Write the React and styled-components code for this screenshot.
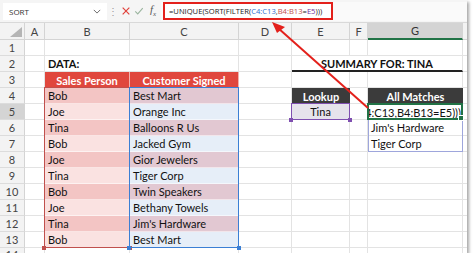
import React from "react";
import styled, { createGlobalStyle, css } from "styled-components";

const GlobalStyle = createGlobalStyle`
  html, body { margin: 0; padding: 0; background: #fff; }
  * { box-sizing: border-box; }
`;

const COLS = ["A", "B", "C", "D", "E", "F", "G"];

const people = ["Bob", "Joe", "Tina", "Bob", "Joe", "Tina", "Bob", "Joe", "Tina", "Bob"];
const customers = [
  "Best Mart",
  "Orange Inc",
  "Balloons R Us",
  "Jacked Gym",
  "Gior Jewelers",
  "Tiger Corp",
  "Twin Speakers",
  "Bethany Towels",
  "Jim's Hardware",
  "Best Mart",
];

// summary side, keyed by sheet row
const matches = { 6: "Jim's Hardware", 7: "Tiger Corp" };

// grid row = sheet row + 1 (row 1 of the grid is the column headings)
const g = (r) => r + 1;

function App() {
  return (
    <>
      <GlobalStyle />
      <Frame>
        <FormulaBar>
          <NameBox>
            <span>SORT</span>
            <Chevron viewBox="0 0 10 6">
              <path d="M1 1l4 4 4-4" fill="none" stroke="#666" strokeWidth="1.2" />
            </Chevron>
          </NameBox>
          <Dots>⋮</Dots>
          <IconBtn viewBox="0 0 12 12">
            <path d="M2 2l8 8M10 2l-8 8" stroke="#e0403a" strokeWidth="1.4" />
          </IconBtn>
          <IconBtn viewBox="0 0 12 12">
            <path d="M1.5 6.5l3 3 6-7" fill="none" stroke="#9bb59f" strokeWidth="1.3" />
          </IconBtn>
          <Fx>
            f<sub>x</sub>
          </Fx>
          <FormulaField>
            <Callout>
              =UNIQUE(SORT(FILTER(<Ref $color="#2f6fd0">C4:C13</Ref>,<Ref $color="#c0504d">B4:B13</Ref>=
              <Ref $color="#7030a0">E5</Ref>)))
            </Callout>
          </FormulaField>
        </FormulaBar>

        <Sheet>
          <Corner>
            <svg width="12" height="10" viewBox="0 0 12 10">
              <path d="M12 0L12 10L0 10Z" fill="#b5b5b5" />
            </svg>
          </Corner>
          {COLS.map((c) => (
            <ColHead key={c} $selected={c === "G"}>
              {c}
            </ColHead>
          ))}
          <ColHead />

          {Array.from({ length: 14 }, (_, i) => (
            <RowHead key={"r" + i} $r={g(i + 1)} $selected={i + 1 === 5}>
              {i + 1}
            </RowHead>
          ))}

          {/* rows 1 and 14: empty */}
          {[1, 14].map((r) =>
            [2, 3, 4, 5, 6, 7, 8, 9].map((c) => <Cell key={r + "-" + c} $r={g(r)} $c={c} />)
          )}

          {/* row 2 */}
          <Cell $r={3} $c={2} />
          <Cell $r={3} $c="3 / span 2" $bold>
            DATA:
          </Cell>
          <Cell $r={3} $c={5} />
          <Cell $r={3} $c="6 / span 3" $bold $center $underline>
            SUMMARY FOR: TINA
          </Cell>
          <Cell $r={3} $c={9} />

          {/* row 3 */}
          <Cell $r={4} $c={2} />
          <TableHead $r={4} $c={3}>Sales Person</TableHead>
          <TableHead $r={4} $c={4}>Customer Signed</TableHead>
          {[5, 6, 7, 8, 9].map((c) => (
            <Cell key={"3-" + c} $r={4} $c={c} />
          ))}

          {/* rows 4-13 */}
          {people.map((p, i) => {
            const r = i + 4;
            const odd = i % 2 === 0;
            return (
              <React.Fragment key={"d" + r}>
                <Cell $r={g(r)} $c={2} />
                <Band $r={g(r)} $c={3} $bg={odd ? "#f3c5c4" : "#fae2e1"}>
                  {p}
                </Band>
                <Band $r={g(r)} $c={4} $bg={odd ? "#e2c8d2" : "#e6eef8"}>
                  {customers[i]}
                </Band>
                <Cell $r={g(r)} $c={5} />
                {r === 4 && <DarkHead $r={g(r)} $c={6}>Lookup</DarkHead>}
                {r === 5 && (
                  <Cell $r={g(r)} $c={6} $center $bg="#e6e3ec">
                    Tina
                  </Cell>
                )}
                {r > 5 && <Cell $r={g(r)} $c={6} />}
                <Cell $r={g(r)} $c={7} />
                {r === 4 && <DarkHead $r={g(r)} $c={8}>All Matches</DarkHead>}
                {r === 5 && (
                  <EditCell $r={g(r)} $c={8}>
                    <span>=UNIQUE(SORT(FILTER(C4:C13,B4:B13=E5)))</span>
                  </EditCell>
                )}
                {r > 5 && (
                  <Cell $r={g(r)} $c={8}>
                    {matches[r]}
                  </Cell>
                )}
                <Cell $r={g(r)} $c={9} />
              </React.Fragment>
            );
          })}

          {/* range highlights from the formula being edited */}
          <Range $r="5 / 15" $c={3} $color="#c0504d" />
          <Range $r="5 / 15" $c={4} $color="#3b7fd4" />
          <Range $r={6} $c={6} $color="#7f4fb0" />
          <Spill $r="6 / 9" $c={8} />
          <Selected $r={6} $c={8} />
        </Sheet>

        <Arrow width="467" height="253" viewBox="0 0 467 253">
          <line x1="368" y1="108" x2="278" y2="28" stroke="#e3201b" strokeWidth="2" />
          <path d="M272 22L285 27L277 33Z" fill="#e3201b" />
        </Arrow>
      </Frame>
    </>
  );
}

const at = css`
  grid-row: ${(p) => p.$r};
  grid-column: ${(p) => p.$c};
`;

const Frame = styled.div`
  position: relative;
  width: 467px;
  height: 253px;
  overflow: hidden;
  background: #fff;
  box-shadow: 2px 2px 3px rgba(0, 0, 0, 0.35);
  font-family: Lato, "Open Sans", sans-serif;
`;

const FormulaBar = styled.div`
  height: 23px;
  display: flex;
  align-items: center;
  background: #f5f5f5;
  border-bottom: 1px solid #d9d9d9;
  padding-left: 3px;
  font-family: "Open Sans", sans-serif;
`;

const NameBox = styled.div`
  width: 104px;
  height: 17px;
  display: flex;
  align-items: center;
  justify-content: space-between;
  padding: 0 6px;
  background: #fff;
  font-size: 8px;
  color: #333;
`;

const Chevron = styled.svg`
  width: 8px;
  height: 5px;
`;

const Dots = styled.span`
  width: 12px;
  text-align: center;
  font-size: 10px;
  color: #999;
`;

const IconBtn = styled.svg`
  width: 10px;
  height: 10px;
  margin: 0 1px 0 2px;
`;

const Fx = styled.span`
  width: 16px;
  text-align: center;
  font-family: "Liberation Serif", serif;
  font-style: italic;
  font-size: 11px;
  color: #555;
  & sub { font-size: 7px; }
`;

const FormulaField = styled.div`
  flex: 1;
  height: 19px;
  display: flex;
  align-items: center;
  padding-left: 2px;
  background: #fafafa;
`;

const Callout = styled.div`
  height: 18px;
  width: 170px;
  display: flex;
  align-items: center;
  padding: 0 4px;
  border: 2px solid #e3201b;
  background: #fff;
  font-size: 7.6px;
  color: #222;
  white-space: nowrap;
`;

const Ref = styled.span`
  color: ${(p) => p.$color};
`;

const Sheet = styled.div`
  position: relative;
  display: grid;
  grid-template-columns: 25px 20px 85px 109px 53px 58px 18px 95px 1fr;
  grid-template-rows: 17px repeat(13, 16px) 1fr;
  height: 230px;
  font-size: 11px;
  color: #111;
`;

const Corner = styled.div`
  grid-row: 1;
  grid-column: 1;
  display: flex;
  align-items: flex-end;
  justify-content: flex-end;
  padding: 0 2px 2px 0;
  background: #f3f3f3;
  border-right: 1px solid #d4d4d4;
  border-bottom: 1px solid #d4d4d4;
`;

const ColHead = styled.div`
  grid-row: 1;
  display: flex;
  align-items: center;
  justify-content: center;
  font-size: 11px;
  color: ${(p) => (p.$selected ? "#333" : "#444")};
  background: ${(p) => (p.$selected ? "#d4d4d4" : "#f3f3f3")};
  border-right: 1px solid #d4d4d4;
  border-bottom: ${(p) => (p.$selected ? "2px solid #217346" : "1px solid #d4d4d4")};
`;

const RowHead = styled.div`
  grid-row: ${(p) => p.$r};
  grid-column: 1;
  display: flex;
  align-items: center;
  justify-content: center;
  font-size: 11px;
  color: #444;
  background: ${(p) => (p.$selected ? "#d4d4d4" : "#f3f3f3")};
  border-right: 1px solid #d4d4d4;
  border-bottom: 1px solid #dcdcdc;
`;

const Cell = styled.div`
  ${at}
  display: flex;
  align-items: center;
  justify-content: ${(p) => (p.$center ? "center" : "flex-start")};
  padding: 0 3px;
  white-space: nowrap;
  overflow: hidden;
  font-weight: ${(p) => (p.$bold ? 700 : 400)};
  background: ${(p) => p.$bg || "#fff"};
  border-right: 1px solid #e3e3e3;
  border-bottom: ${(p) => (p.$underline ? "2px solid #222" : "1px solid #e3e3e3")};
`;

const TableHead = styled.div`
  ${at}
  display: flex;
  align-items: center;
  justify-content: center;
  font-weight: 700;
  color: #fff;
  background: #e0473d;
  border-right: 1px solid #f2b2ad;
`;

const Band = styled.div`
  ${at}
  display: flex;
  align-items: center;
  padding: 0 3px;
  white-space: nowrap;
  background: ${(p) => p.$bg};
  border-bottom: 1px solid rgba(255, 255, 255, 0.55);
`;

const DarkHead = styled.div`
  ${at}
  display: flex;
  align-items: center;
  justify-content: center;
  font-weight: 700;
  color: #fff;
  background: #3b3b3b;
`;

const EditCell = styled.div`
  ${at}
  display: flex;
  align-items: center;
  justify-content: flex-end;
  padding-right: 2px;
  overflow: hidden;
  white-space: nowrap;
  background: #fff;
`;

const Range = styled.div`
  ${at}
  position: relative;
  z-index: 2;
  pointer-events: none;
  border: 1.5px solid ${(p) => p.$color};
  margin: -1px 0 0 -1px;
  &::before,
  &::after {
    content: "";
    position: absolute;
    bottom: -3px;
    width: 4px;
    height: 4px;
    background: ${(p) => p.$color};
  }
  &::before { left: -3px; }
  &::after { right: -3px; }
`;

const Spill = styled.div`
  ${at}
  z-index: 2;
  pointer-events: none;
  border: 1px solid #9ea6dc;
`;

const Selected = styled.div`
  ${at}
  position: relative;
  z-index: 3;
  pointer-events: none;
  border: 2px solid #217346;
  margin: -1px 0 0 -1px;
  &::after {
    content: "";
    position: absolute;
    right: -3px;
    bottom: -3px;
    width: 4px;
    height: 4px;
    background: #217346;
    border: 1px solid #fff;
  }
`;

const Arrow = styled.svg`
  position: absolute;
  top: 0;
  left: 0;
  z-index: 5;
  pointer-events: none;
`;

export default App;
